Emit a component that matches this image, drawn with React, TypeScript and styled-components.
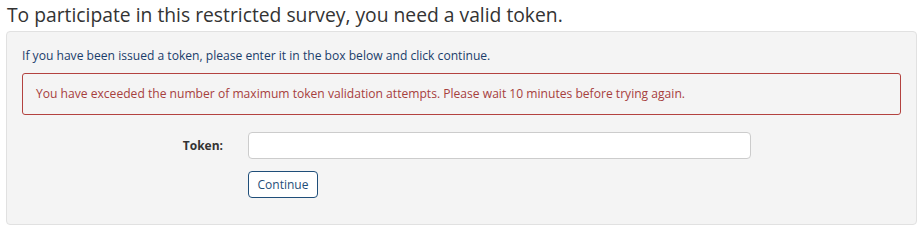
import React from "react";
import styled, { createGlobalStyle } from "styled-components";

const Global = createGlobalStyle`
  html, body { margin: 0; padding: 0; background: #fff; }
  body { font-family: "Open Sans", "Noto Sans", sans-serif; color: #333; }
  * { box-sizing: border-box; }
`;

const Page = styled.div`
  padding: 0 6px;
`;

const Title = styled.h1`
  margin: 0;
  padding: 0 0 0 1px;
  font-size: 19.3px;
  font-weight: 400;
  line-height: 29px;
  color: #333;
  height: 31px;
`;

const Panel = styled.div`
  background: #f4f4f4;
  border: 1px solid #e1e1e1;
  border-radius: 4px;
  padding: 14px 15px 26px 15px;
`;

const Intro = styled.p`
  margin: 0 0 7px 0;
  font-size: 12.1px;
  line-height: 20px;
  color: #1a3d6b;
`;

const Alert = styled.div`
  border: 1px solid #b3423f;
  border-radius: 3px;
  padding: 11px 13px;
  font-size: 12.1px;
  line-height: 18px;
  color: #a7403d;
  margin-bottom: 17px;
`;

const Form = styled.form`
  display: grid;
  grid-template-columns: 201px 503px;
  column-gap: 25px;
  row-gap: 12px;
  align-items: center;
`;

const Label = styled.label`
  text-align: right;
  font-weight: 700;
  font-size: 12px;
  color: #333;
  padding-right: 0;
`;

const Input = styled.input`
  height: 27px;
  width: 100%;
  border: 1px solid #ccc;
  border-radius: 4px;
  background: #fff;
  font-family: inherit;
  font-size: 12px;
  padding: 0 8px;
  outline: none;
`;

const Button = styled.button`
  grid-column: 2;
  justify-self: start;
  height: 27px;
  padding: 0 8.5px;
  border: 1px solid #1f4e79;
  border-radius: 4px;
  background: #fff;
  color: #1f4e79;
  font-family: inherit;
  font-size: 12px;
  cursor: pointer;
`;

export default function App() {
  return (
    <Page>
      <Global />
      <Title>To participate in this restricted survey, you need a valid token.</Title>
      <Panel>
        <Intro>If you have been issued a token, please enter it in the box below and click continue.</Intro>
        <Alert>
          You have exceeded the number of maximum token validation attempts. Please wait 10 minutes before trying again.
        </Alert>
        <Form onSubmit={(e) => e.preventDefault()}>
          <Label htmlFor="token">Token:</Label>
          <Input id="token" type="text" />
          <Button type="submit">Continue</Button>
        </Form>
      </Panel>
    </Page>
  );
}
